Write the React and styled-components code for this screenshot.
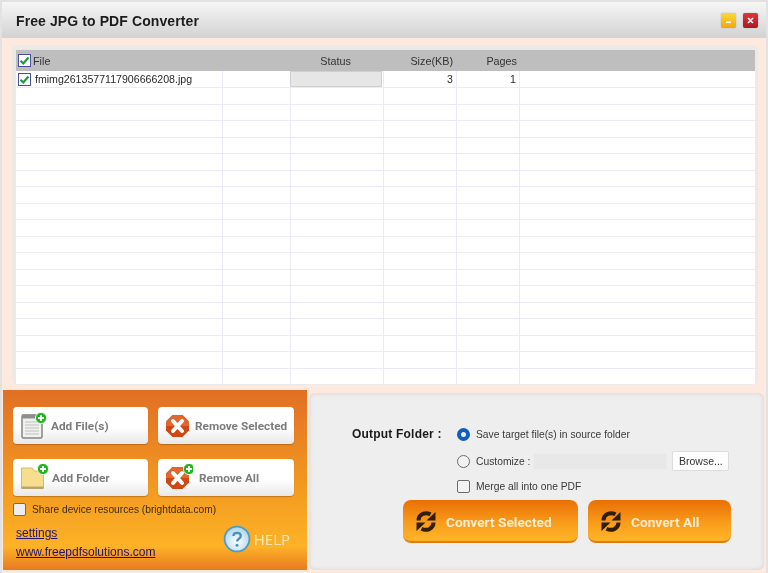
import React from 'react';
import styled, { createGlobalStyle } from 'styled-components';

const GlobalStyle = createGlobalStyle`
  html, body { margin: 0; padding: 0; background: #e4e4e4; }
  body { font-family: "Liberation Sans", Arial, sans-serif; }
  * { box-sizing: border-box; }
`;

const Page = styled.div`
  width: 768px;
  height: 573px;
  overflow: hidden;
  display: flex;
  flex-direction: column;
  padding: 2px 2px 0 2px;
  background: #e2e2e2;
  filter: blur(0.45px);
`;

const TitleBar = styled.div`
  height: 36px;
  flex: none;
  display: flex;
  align-items: center;
  padding: 0 8px 0 14px;
  background: linear-gradient(#f6f6f6, #d2d2d2);
`;

const Title = styled.div`
  flex: 1;
  font-size: 14px;
  font-weight: bold;
  letter-spacing: 0.1px;
  color: #1c1c1c;
  padding-top: 1px;
`;

const WinButton = styled.div`
  width: 15px;
  height: 15px;
  margin-left: 7px;
  border-radius: 2px;
  display: flex;
  align-items: center;
  justify-content: center;
  background: ${p => p.$red ? 'linear-gradient(#e0353b, #a81a20)' : 'linear-gradient(#f7d938, #f0a808)'};
  box-shadow: 0 0 1px #777;
`;

const Body = styled.div`
  flex: 1;
  min-height: 0;
  display: flex;
  flex-direction: column;
  background: #fde9dd;
  padding: 7px 2px 3px 1px;
`;

const TableFrame = styled.div`
  height: 340px;
  flex: none;
  margin: 0 6px 0 9px;
  padding: 5px 3px 1px 4px;
  background: #eceae8;
  border-radius: 6px;
  display: flex;
  flex-direction: column;
`;

const columns = '207px 68px 93px 73px 63px 1fr';

const HeaderRow = styled.div`
  height: 21px;
  flex: none;
  display: grid;
  grid-template-columns: ${columns};
  align-items: center;
  background: #bebebe;
  color: #333;
  font-size: 10.8px;
`;

const Rows = styled.div`
  flex: 1;
  min-height: 0;
  background: #fff;
  display: grid;
  grid-template-rows: repeat(19, minmax(0, 1fr));
`;

const Row = styled.div`
  display: grid;
  min-height: 0;
  grid-template-columns: ${columns};
  & + & { border-top: 1px solid #eceaf8; }
`;

const Cell = styled.div`
  display: flex;
  align-items: center;
  min-height: 0;
  justify-content: ${p => p.$right ? 'flex-end' : 'flex-start'};
  padding: ${p => p.$right ? '0 3px 0 0' : '0'};
  border-right: 1px solid #eceaf8;
  font-size: 10.6px;
  color: #2a2a2a;
  &:last-child { border-right: 0; }
`;

const HeadCell = styled.div`
  display: flex;
  align-items: center;
  gap: 2px;
  padding: ${p => p.$pad || '0'};
  justify-content: ${p => p.$center ? 'center' : p.$right ? 'flex-end' : 'flex-start'};
`;

const Progress = styled.div`
  width: 92px;
  height: 16px;
  flex: none;
  margin-left: -1px;
  background: #e6e6e6;
  border: 1px solid #cfcfcf;
`;

const TickBox = styled.span`
  width: 13px;
  height: 13px;
  margin-left: 2px;
  flex: none;
  display: inline-flex;
  align-items: center;
  justify-content: center;
  border: 1px solid #4b4fa0;
  background: #fff;
  margin-right: ${p => p.$gap || 0}px;
`;

const BottomRow = styled.div`
  flex: 1;
  min-height: 0;
  display: flex;
  gap: 2px;
  margin-top: 5px;
`;

const LeftPanel = styled.div`
  width: 304px;
  padding: 17px 13px 0 10px;
  background: linear-gradient(#e16f25 0%, #f39a20 55%, #fdb227 87%, #e77a22 100%);
  display: flex;
  flex-direction: column;
`;

const ButtonGrid = styled.div`
  display: grid;
  grid-template-columns: 135px 136px;
  grid-template-rows: 37px 37px;
  column-gap: 10px;
  row-gap: 15px;
`;

const ToolButton = styled.div`
  display: flex;
  align-items: center;
  white-space: nowrap;
  gap: ${p => p.$gap ?? 2}px;
  padding-left: ${p => p.$left || 6}px;
  border-radius: 4px;
  background: linear-gradient(#ffffff 55%, #e8e8e8);
  box-shadow: 0 1px 1px rgba(120, 60, 0, 0.4);
  font-family: "Roboto", sans-serif;
  font-weight: bold;
  font-size: 11.8px;
  color: #7c7c7c;
`;

const ShareRow = styled.label`
  display: flex;
  align-items: center;
  gap: 6px;
  margin-top: 7px;
  font-size: 10.2px;
  color: #3d2c06;
`;

const PlainBox = styled.span`
  width: 13px;
  height: 13px;
  flex: none;
  border: 1px solid #6c6c6c;
  border-radius: 2px;
  background: ${p => p.$soft ? '#f2f2f2' : '#eeeeee'};
`;

const LinkArea = styled.div`
  flex: 1;
  display: flex;
  justify-content: space-between;
  padding: 11px 4px 0 3px;
`;

const Links = styled.div`
  display: flex;
  flex-direction: column;
  gap: 6px;
`;

const PageLink = styled.a`
  font-size: 12px;
  line-height: 13px;
  color: #22146e;
  text-decoration: underline;
`;

const Help = styled.div`
  display: flex;
  align-items: center;
  gap: 3px;
  height: 30px;
  margin-top: -3px;
  font-family: "Open Sans", sans-serif;
  font-size: 15px;
  color: #ffe9b8;
`;

const RightPanel = styled.div`
  flex: 1;
  margin-top: 3px;
  border-radius: 6px;
  background: #eeeeee;
  box-shadow: inset 0 0 4px #d0d0d0;
  display: flex;
  flex-direction: column;
  align-items: flex-start;
  padding: 33px 0 0 43px;
`;

const OptionGrid = styled.div`
  display: grid;
  grid-template-columns: 105px auto;
  font-size: 10.3px;
  color: #3a3a3a;
`;

const FolderLabel = styled.div`
  font-weight: bold;
  font-size: 12px;
  color: #1a1a1a;
  white-space: nowrap;
  line-height: 16px;
  letter-spacing: 0.2px;
`;

const Options = styled.div`
  display: flex;
  flex-direction: column;
`;

const Option = styled.div`
  display: flex;
  align-items: center;
  height: ${p => p.$h}px;
  gap: 6px;
`;

const Radio = styled.span`
  width: 13px;
  height: 13px;
  flex: none;
  border-radius: 50%;
  border: ${p => p.$on ? '4px solid #0a5fbf' : '1px solid #6c6c6c'};
  background: #f2f2f2;
`;

const PathInput = styled.div`
  width: 134px;
  height: 17px;
  margin-left: -3px;
  background: #e8e8e8;
  border: 1px solid #ececec;
`;

const Browse = styled.div`
  width: 57px;
  height: 20px;
  margin-left: -1px;
  display: flex;
  align-items: center;
  justify-content: center;
  background: #fdfdfd;
  border: 1px solid #dcdcdc;
  border-radius: 2px;
  font-size: 10.5px;
  color: #333;
`;

const ConvertRow = styled.div`
  display: flex;
  gap: 10px;
  margin: 7px 0 0 51px;
`;

const ConvertButton = styled.div`
  width: ${p => p.$w}px;
  height: 43px;
  display: flex;
  align-items: center;
  gap: 10px;
  padding: 2px 0 0 13px;
  border-radius: 8px;
  background: linear-gradient(#e96f05, #f99b1b 55%, #feb327 95%);
  border-bottom: 2px solid #e27b12;
  font-family: "Roboto", sans-serif;
  font-weight: bold;
  font-size: 13.7px;
  color: #fdeccd;
`;

const Check = () => (
  <svg width="11" height="11" viewBox="0 0 11 11">
    <path d="M1.5 5.8 L4.3 8.4 L9.5 2.6" fill="none" stroke="#1c9a35" strokeWidth="2.2" />
  </svg>
);

const PlusBadge = ({ cx, cy }) => (
  <g>
    <circle cx={cx} cy={cy} r="5.6" fill="#22b41f" stroke="#eaf7e4" strokeWidth="1" />
    <path d={`M${cx - 3} ${cy} H${cx + 3} M${cx} ${cy - 3} V${cy + 3}`} stroke="#fff" strokeWidth="1.8" />
  </g>
);

const NoteIcon = () => (
  <svg width="28" height="28" viewBox="0 0 28 28">
    <rect x="1" y="3" width="20" height="23" rx="1.5" fill="#f1f1ed" stroke="#858585" strokeWidth="1.5" />
    <rect x="1" y="2.5" width="20" height="4" fill="#8f8f8f" />
    <path d="M4 10 H18 M4 13 H18 M4 16 H18 M4 19 H18 M4 22 H18" stroke="#d0d0d0" strokeWidth="1.4" />
    <PlusBadge cx={20} cy={6} />
  </svg>
);

const FolderIcon = () => (
  <svg width="30" height="28" viewBox="0 0 30 28">
    <path d="M0.5 4 H11 L13 7 H22.5 V24 H0.5 Z" fill="#f7de8e" stroke="#d9bb66" strokeWidth="1" />
    <rect x="0.5" y="22.5" width="22" height="2.5" fill="#b9a36d" />
    <PlusBadge cx={22} cy={5} />
  </svg>
);

const StopIcon = ({ plus }) => (
  <svg width="29" height="28" viewBox="0 0 29 28">
    <path d="M8.5 3 H18.5 L25 9.5 V18.5 L18.5 25 H8.5 L2 18.5 V9.5 Z" fill="#cf4712" />
    <path d="M8.5 3 H18.5 L25 9.5 V14 H2 V9.5 Z" fill="#e0682e" />
    <path d="M9 9 L18 19 M18 9 L9 19" stroke="#fff" strokeWidth="4" strokeLinecap="round" />
    {plus && <PlusBadge cx={25} cy={5} />}
  </svg>
);

const HelpIcon = () => (
  <svg width="28" height="28" viewBox="0 0 28 28">
    <defs>
      <radialGradient id="helpFill" cx="50%" cy="60%" r="60%">
        <stop offset="0%" stopColor="#ffffff" />
        <stop offset="100%" stopColor="#a9d4ea" />
      </radialGradient>
    </defs>
    <circle cx="14" cy="14" r="12.4" fill="url(#helpFill)" stroke="#4d9cc6" strokeWidth="1.8" />
    <path d="M10.4 11 C10.4 6.8 17.8 6.8 17.8 11 C17.8 13.8 14 13.6 14 16.6" fill="none" stroke="#4d8fb8" strokeWidth="2.3" />
    <circle cx="14" cy="20.2" r="1.5" fill="#4d8fb8" />
  </svg>
);

const SyncArrow = () => (
  <>
    <path d="M2.5 10.5 C2.5 4.5 9 1.5 14.5 4.2" fill="none" stroke="#2f1f06" strokeWidth="4" />
    <path d="M19.5 2 V10.5 H10.5 Z" fill="#2f1f06" />
  </>
);

const SyncIcon = () => (
  <svg width="20" height="23" viewBox="0 0 20 23">
    <SyncArrow />
    <g transform="rotate(180 10 11.5)"><SyncArrow /></g>
  </svg>
);

const App = () => {
  const blank = Array.from({ length: 18 });
  return (
    <Page>
      <GlobalStyle />
      <TitleBar>
        <Title>Free JPG to PDF Converter</Title>
        <WinButton>
          <svg width="7" height="7" viewBox="0 0 7 7"><rect x="1" y="4.5" width="5" height="1.6" fill="#fff" /></svg>
        </WinButton>
        <WinButton $red>
          <svg width="7" height="7" viewBox="0 0 7 7"><path d="M1 1 L6 6 M6 1 L1 6" stroke="#fff" strokeWidth="1.7" /></svg>
        </WinButton>
      </TitleBar>
      <Body>
        <TableFrame>
          <HeaderRow>
            <HeadCell><TickBox><Check /></TickBox>File</HeadCell>
            <HeadCell />
            <HeadCell $center $pad="0 4px 0 0">Status</HeadCell>
            <HeadCell $right $pad="0 4px 0 0">Size(KB)</HeadCell>
            <HeadCell $right $pad="0 3px 0 0">Pages</HeadCell>
            <HeadCell />
          </HeaderRow>
          <Rows>
            <Row>
              <Cell><TickBox $gap={4}><Check /></TickBox>fmimg2613577117906666208.jpg</Cell>
              <Cell />
              <Cell><Progress /></Cell>
              <Cell $right>3</Cell>
              <Cell $right>1</Cell>
              <Cell />
            </Row>
            {blank.map((_, i) => (
              <Row key={i}>
                <Cell /><Cell /><Cell /><Cell /><Cell /><Cell />
              </Row>
            ))}
          </Rows>
        </TableFrame>
        <BottomRow>
          <LeftPanel>
            <ButtonGrid>
              <ToolButton $left={8}><NoteIcon />Add File(s)</ToolButton>
              <ToolButton><StopIcon />Remove Selected</ToolButton>
              <ToolButton $gap={1} $left={8}><FolderIcon />Add Folder</ToolButton>
              <ToolButton $gap={6}><StopIcon plus />Remove All</ToolButton>
            </ButtonGrid>
            <ShareRow><PlainBox />Share device resources (brightdata.com)</ShareRow>
            <LinkArea>
              <Links>
                <PageLink>settings</PageLink>
                <PageLink>www.freepdfsolutions.com</PageLink>
              </Links>
              <Help><HelpIcon />HELP</Help>
            </LinkArea>
          </LeftPanel>
          <RightPanel>
            <OptionGrid>
              <FolderLabel>Output Folder :</FolderLabel>
              <Options>
                <Option $h={16}><Radio $on />Save target file(s) in source folder</Option>
                <Option $h={38}><Radio />Customize :<PathInput /><Browse>Browse...</Browse></Option>
                <Option $h={13}><PlainBox $soft />Merge all into one PDF</Option>
              </Options>
            </OptionGrid>
            <ConvertRow>
              <ConvertButton $w={175}><SyncIcon />Convert Selected</ConvertButton>
              <ConvertButton $w={143}><SyncIcon />Convert All</ConvertButton>
            </ConvertRow>
          </RightPanel>
        </BottomRow>
      </Body>
    </Page>
  );
};

export default App;
